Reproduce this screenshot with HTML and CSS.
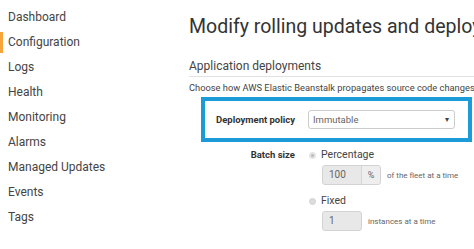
FILE: index.html
```html
<!DOCTYPE html>
<html lang="en">
<head>
  <meta charset="UTF-8">
  <title>Modify rolling updates and deployments</title>
  <link rel="stylesheet" href="styles.css">
</head>
<body>
  <div class="layout">
    <nav class="sidebar">
      <a class="nav-item">Dashboard</a>
      <a class="nav-item active">Configuration</a>
      <a class="nav-item">Logs</a>
      <a class="nav-item">Health</a>
      <a class="nav-item">Monitoring</a>
      <a class="nav-item">Alarms</a>
      <a class="nav-item">Managed Updates</a>
      <a class="nav-item">Events</a>
      <a class="nav-item">Tags</a>
    </nav>
    <main class="content">
      <h1>Modify rolling updates and deployments</h1>
      <h2>Application deployments</h2>
      <p class="desc">Choose how AWS Elastic Beanstalk propagates source code changes to your instances.</p>

      <div class="form-row highlight">
        <div class="row-label">Deployment policy</div>
        <div class="select">
          <span>Immutable</span>
          <span class="caret">&#9662;</span>
        </div>
      </div>

      <div class="form-row plain">
        <div class="row-label top">Batch size</div>
        <div class="options">
          <div class="radio-line"><span class="radio checked"></span>Percentage</div>
          <div class="input-line">
            <div class="input-group">
              <span class="field">100</span><span class="addon">%</span>
            </div>
            <span class="hint">of the fleet at a time</span>
          </div>
          <div class="radio-line second"><span class="radio"></span>Fixed</div>
          <div class="input-line">
            <div class="input-group">
              <span class="field">1</span>
            </div>
            <span class="hint">instances at a time</span>
          </div>
        </div>
      </div>
    </main>
  </div>
</body>
</html>
```

FILE: styles.css
```css
body { margin: 0; font-family: Roboto, "Liberation Sans", sans-serif; color: #444; background: #fff; }
.layout { display: flex; width: 474px; height: 249px; overflow: hidden; }

.sidebar { width: 170px; flex: none; padding-top: 7px; display: flex; flex-direction: column; gap: 4px; }
.nav-item { display: block; font-size: 12px; line-height: 21px; padding-left: 5px; border-left: 3px solid transparent; color: #444; }
.nav-item.active { border-left-color: #f7a43a; }

.content { flex: 1; padding-left: 19px; min-width: 0; white-space: nowrap; overflow: hidden; }
h1 { margin: 13px 0 0; font-size: 19.5px; font-weight: 400; line-height: 28px; color: #333; }
h2 { margin: 16px 0 0; font-size: 12px; font-weight: 400; line-height: 19px; color: #444; border-bottom: 1px solid #e2e2e2; }
.desc { margin: 4px 0 0; font-size: 9.3px; line-height: 14px; color: #444; }

.form-row { display: flex; gap: 13px; align-items: center; }
.row-label { width: 90px; flex: none; font-size: 9.5px; font-weight: 700; color: #333; text-align: right; }
.row-label.top { align-self: flex-start; line-height: 16px; }

.highlight { margin: 2px 0 0 12px; width: 256px; height: 37px; border: 4px solid #1b9bd7; padding-right: 7px; }
.select { display: flex; justify-content: space-between; align-items: center; width: 136px; height: 17px; border: 1px solid #ccc; border-radius: 3px; padding: 0 5px 0 4px; font-size: 9.5px; color: #666; }
.select .caret { font-size: 8px; color: #444; }

.plain { margin: 5px 0 0 16px; align-items: flex-start; }
.options { display: flex; flex-direction: column; }
.radio-line { display: flex; align-items: center; gap: 5px; font-size: 10.5px; line-height: 16px; color: #444; }
.radio-line.second { margin-top: 8px; }
.radio { width: 7px; height: 7px; border-radius: 50%; background: #dcdcdc; box-sizing: border-box; border: 1px solid #d2d2d2; margin-left: 1px; }
.radio.checked { background: #bbb; border: 2px solid #e4e4e4; }

.input-line { display: flex; align-items: center; margin: 2px 0 0 14px; }
.input-group { display: flex; height: 20px; border: 1px solid #d3d3d3; border-radius: 3px; background: #e8e8e8; box-sizing: border-box; overflow: hidden; }
.field { width: 38px; padding-left: 6px; box-sizing: border-box; font-size: 10px; line-height: 18px; color: #666; }
.addon { width: 18px; border-left: 1px solid #d6d6d6; background: #eeeeee; text-align: center; font-size: 9px; line-height: 18px; color: #666; }
.hint { margin-left: 6px; font-size: 8px; color: #666; }
```
